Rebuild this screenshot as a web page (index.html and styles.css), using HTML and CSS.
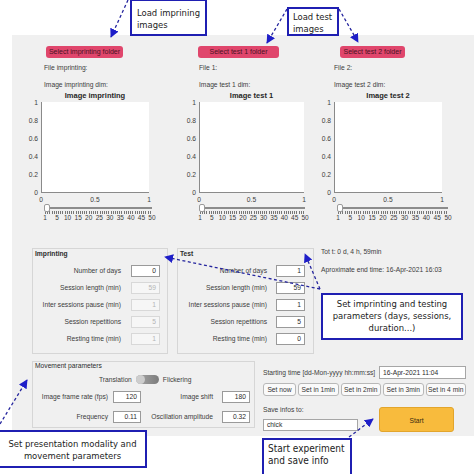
FILE: index.html
```html
<!DOCTYPE html>
<html lang="en">
<head>
  <meta charset="UTF-8">
  <title>Imprinting experiment</title>
  <link rel="stylesheet" href="styles.css">
</head>
<body>
<div class="page">

  <div class="app">

    <!-- three image columns -->
    <div class="images">
      <div class="col col-1">
        <div class="btn-folder">Select imprinting folder</div>
        <div class="lbl">File imprinting:</div>
        <div class="lbl lbl-dim">Image imprinting dim:</div>
        <div class="axes">
          <div class="ax-title">Image imprinting</div>
          <div class="yticks"><span>1</span><span>0.8</span><span>0.6</span><span>0.4</span><span>0.2</span><span>0</span></div>
          <div class="plot"></div>
          <div class="xticks"><span>0</span><span>0.5</span><span>1</span></div>
        </div>
        <div class="slider">
          <div class="track"><div class="thumb"></div></div>
          <div class="ticks"></div>
          <div class="tick-labels">
            <span class="t0"><i>1</i></span><span class="t4"><i>5</i></span><span><i>10</i></span><span><i>15</i></span><span><i>20</i></span><span><i>25</i></span><span><i>30</i></span><span><i>35</i></span><span><i>40</i></span><span><i>45</i></span><span><i>50</i></span>
          </div>
        </div>
      </div>

      <div class="col col-2">
        <div class="btn-folder">Select test 1 folder</div>
        <div class="lbl">File 1:</div>
        <div class="lbl lbl-dim">Image test 1 dim:</div>
        <div class="axes">
          <div class="ax-title">Image test 1</div>
          <div class="yticks"><span>1</span><span>0.8</span><span>0.6</span><span>0.4</span><span>0.2</span><span>0</span></div>
          <div class="plot"></div>
          <div class="xticks"><span>0</span><span>0.5</span><span>1</span></div>
        </div>
        <div class="slider">
          <div class="track"><div class="thumb"></div></div>
          <div class="ticks"></div>
          <div class="tick-labels">
            <span class="t0"><i>1</i></span><span class="t4"><i>5</i></span><span><i>10</i></span><span><i>15</i></span><span><i>20</i></span><span><i>25</i></span><span><i>30</i></span><span><i>35</i></span><span><i>40</i></span><span><i>45</i></span><span><i>50</i></span>
          </div>
        </div>
      </div>

      <div class="col col-3">
        <div class="btn-folder">Select test 2 folder</div>
        <div class="lbl">File 2:</div>
        <div class="lbl lbl-dim">Image test 2 dim:</div>
        <div class="axes">
          <div class="ax-title">Image test 2</div>
          <div class="yticks"><span>1</span><span>0.8</span><span>0.6</span><span>0.4</span><span>0.2</span><span>0</span></div>
          <div class="plot"></div>
          <div class="xticks"><span>0</span><span>0.5</span><span>1</span></div>
        </div>
        <div class="slider">
          <div class="track"><div class="thumb"></div></div>
          <div class="ticks"></div>
          <div class="tick-labels">
            <span class="t0"><i>1</i></span><span class="t4"><i>5</i></span><span><i>10</i></span><span><i>15</i></span><span><i>20</i></span><span><i>25</i></span><span><i>30</i></span><span><i>35</i></span><span><i>40</i></span><span><i>45</i></span><span><i>50</i></span>
          </div>
        </div>
      </div>
    </div>

    <!-- session parameters -->
    <div class="params">
      <div class="panel panel-imprint">
        <div class="panel-title bold">Imprinting</div>
        <div class="rows">
          <div class="row-lbl">Number of days</div><div class="field">0</div>
          <div class="row-lbl">Session length (min)</div><div class="field off">59</div>
          <div class="row-lbl">Inter sessions pause (min)</div><div class="field off">1</div>
          <div class="row-lbl">Session repetitions</div><div class="field off">5</div>
          <div class="row-lbl">Resting time (min)</div><div class="field off">1</div>
        </div>
      </div>
      <div class="panel panel-test">
        <div class="panel-title bold">Test</div>
        <div class="rows">
          <div class="row-lbl">Number of days</div><div class="field">1</div>
          <div class="row-lbl">Session length (min)</div><div class="field">59</div>
          <div class="row-lbl">Inter sessions pause (min)</div><div class="field">1</div>
          <div class="row-lbl">Session repetitions</div><div class="field">5</div>
          <div class="row-lbl">Resting time (min)</div><div class="field">0</div>
        </div>
      </div>
      <div class="info">
        <div class="lbl">Tot t: 0 d, 4 h, 59min</div>
        <div class="lbl info-end">Aproximate end time: 16-Apr-2021 16:03</div>
      </div>
    </div>

    <!-- movement + start -->
    <div class="bottom">
      <div class="panel panel-move">
        <div class="panel-title">Movement parameters</div>
        <div class="toggle-row">
          <span>Translation</span>
          <div class="switch"><div class="knob"></div></div>
          <span>Flickering</span>
        </div>
        <div class="move-grid">
          <div class="row-lbl">Image frame rate (fps)</div><div class="field">120</div>
          <div class="row-lbl">Image shift</div><div class="field">180</div>
          <div class="row-lbl">Frequency</div><div class="field">0.11</div>
          <div class="row-lbl">Oscillation amplitude</div><div class="field">0.32</div>
        </div>
      </div>

      <div class="run">
        <div class="start-row">
          <span>Starting time [dd-Mon-yyyy hh:mm:ss]</span>
          <div class="field field-left field-time">16-Apr-2021 11:04</div>
        </div>
        <div class="set-row">
          <div class="btn btn-now">Set now</div>
          <div class="btn">Set in 1min</div>
          <div class="btn">Set in 2min</div>
          <div class="btn">Set in 3min</div>
          <div class="btn">Set in 4 min</div>
        </div>
        <div class="save-row">
          <div class="save-col">
            <div class="lbl">Save infos to:</div>
            <div class="field field-left field-save">chick</div>
          </div>
          <div class="btn-start">Start</div>
        </div>
      </div>
    </div>
  </div>

  <!-- annotations over the screenshot -->
  <svg class="arrows" width="474" height="474" viewBox="0 0 474 474">
    <defs>
      <marker id="ah" viewBox="0 0 10 10" refX="9" refY="5" markerWidth="9" markerHeight="9" markerUnits="userSpaceOnUse" orient="auto">
        <path d="M0 0L10 5L0 10z" fill="#1e1ec8"/>
      </marker>
    </defs>
    <g stroke="#25259e" stroke-width="1.3" stroke-dasharray="3 2.5" fill="none" marker-end="url(#ah)">
      <line x1="128" y1="0" x2="111" y2="37"/>
      <line x1="287" y1="9" x2="267" y2="43"/>
      <line x1="339" y1="9" x2="358" y2="42"/>
      <line x1="320" y1="289" x2="165" y2="257"/>
      <line x1="320" y1="289" x2="305" y2="254"/>
      <line x1="0" y1="424" x2="27" y2="380"/>
      <line x1="349" y1="437" x2="373" y2="419"/>
    </g>
  </svg>

  <div class="note note-imp">Load imprining<br>images</div>
  <div class="note note-test">Load test<br>images</div>
  <div class="note note-params">Set imprinting and testing<br>parameters (days, sessions,<br>duration...)</div>
  <div class="note note-move">Set presentation modality and<br>movement parameters</div>
  <div class="note note-start">Start experiment<br>and save info</div>

</div>
</body>
</html>
```

FILE: styles.css
```css
body {
  margin: 0;
  background: #fff;
}
.page {
  position: relative;
  width: 474px;
  height: 474px;
  overflow: hidden;
  font-family: 'Liberation Sans', Arial, sans-serif;
  font-size: 6.7px;
  color: #3c3c3c;
}
.bold {
  font-weight: bold;
}

/* main window */
.app {
  margin: 35px 0 0 12px;
  height: 401px;
  padding: 11px 0 0 16px;
  box-sizing: border-box;
  background: #f0f0f0;
}

.images {
  display: flex;
}
.col-1 { width: 158px; }
.col-2 { width: 135px; }
.col-3 { width: 140px; }

.btn-folder {
  height: 12px;
  line-height: 12px;
  border-radius: 3px;
  background: #e0466c;
  color: #4a1424;
  text-align: center;
  font-size: 7px;
  white-space: nowrap;
}
.col-1 .btn-folder { margin-left: 18px; width: 77px; }
.col-2 .btn-folder { margin-left: 12px; width: 81px; }
.col-3 .btn-folder { margin-left: 19px; width: 65px; }

.lbl {
  height: 10px;
  line-height: 10px;
  white-space: nowrap;
}
.col .lbl { margin-top: 5px; margin-left: 13px; }
.col-1 .lbl { margin-left: 16px; }
.col .lbl-dim { margin-top: 7px; }

/* axes */
.axes {
  display: grid;
  grid-template-columns: 13px 108px;
}
.col-2 .axes { grid-template-columns: 13px 105px; }
.ax-title {
  grid-column: 2;
  margin-top: 1px;
  height: 10px;
  line-height: 10px;
  text-align: center;
  font-weight: bold;
  font-size: 7.5px;
  color: #262626;
}
.yticks {
  grid-column: 1;
  margin-top: 1px;
  height: 91px;
  padding-right: 3px;
  display: flex;
  flex-direction: column;
  justify-content: space-between;
}
.yticks span {
  height: 0;
  display: flex;
  align-items: center;
  justify-content: flex-end;
}
.plot {
  grid-column: 2;
  margin-top: 1px;
  height: 91px;
  box-sizing: border-box;
  background: #fff;
  border-left: 1.5px solid #8a8a8a;
  border-bottom: 1.5px solid #8a8a8a;
}
.xticks {
  grid-column: 2;
  margin-top: 3px;
  height: 8px;
  display: flex;
  justify-content: space-between;
}
.xticks span {
  width: 0;
  display: flex;
  justify-content: center;
  line-height: 8px;
}

/* slider */
.slider {
  margin-left: 17px;
  width: 107px;
}
.col-2 .slider { margin-left: 14px; width: 105px; }
.col-3 .slider { width: 110px; }
.track {
  height: 7px;
  display: flex;
  align-items: center;
  background: linear-gradient(#8c8c8c, #8c8c8c) 0 50% / 100% 2px no-repeat;
}
.thumb {
  width: 4px;
  height: 6px;
  margin-left: -1px;
  background: #fff;
  border: 1px solid #9a9a9a;
  border-radius: 2px;
}
.ticks {
  height: 3px;
  background: repeating-linear-gradient(to right, #777 0 1px, transparent 1px calc(100% / 49));
}
.tick-labels {
  display: flex;
  height: 7px;
  line-height: 7px;
  font-size: 6.5px;
}
.tick-labels span {
  flex: 5 0 0;
  text-align: right;
  white-space: nowrap;
}
.tick-labels .t0 { flex: 0 0 0; text-align: left; }
.tick-labels .t4 { flex-grow: 4; }
.tick-labels i {
  display: inline-block;
  font-style: normal;
  transform: translateX(50%);
}
.tick-labels .t0 i { transform: translateX(-50%); }

/* parameter panels */
.params {
  display: flex;
  margin: 27px 0 0 4px;
}
.panel {
  border: 1px solid #d6d6d6;
  box-sizing: border-box;
}
.panel-imprint { width: 136px; height: 106px; }
.panel-test { width: 137px; height: 106px; margin-left: 9px; }
.panel-title {
  height: 9px;
  line-height: 9px;
  padding-left: 2px;
  color: #2c2c2c;
}
.rows {
  margin-top: 7px;
  padding-right: 7px;
  display: grid;
  grid-template-columns: 1fr 29px;
  column-gap: 10px;
  row-gap: 5px;
}
.panel-test .rows { column-gap: 9px; padding-right: 8px; }
.row-lbl {
  height: 12px;
  line-height: 12px;
  text-align: right;
  white-space: nowrap;
}
.field {
  height: 12px;
  line-height: 10px;
  box-sizing: border-box;
  padding: 0 3px;
  border: 1px solid #9a9a9a;
  background: #fff;
  text-align: right;
  color: #2a2a2a;
  white-space: nowrap;
}
.field.off {
  border-color: #d8d8d8;
  background: #f6f6f6;
  color: #b4b4b4;
}
.field-left { text-align: left; }

.info {
  margin-left: 7px;
}
.info .lbl { margin-top: -1px; }
.info .info-end { margin-top: 8px; }

/* movement + start */
.bottom {
  display: flex;
  margin: 7px 0 0 4px;
}
.panel-move {
  width: 223px;
  height: 67px;
}
.panel-move .panel-title {
  height: 8px;
  line-height: 8px;
}
.toggle-row {
  display: flex;
  align-items: center;
  height: 10px;
  margin-top: 4px;
  padding-left: 66px;
  gap: 4px;
}
.switch {
  width: 23px;
  height: 9px;
  border-radius: 5px;
  background: linear-gradient(to right, #a8a8a8, #7c7c7c);
  display: flex;
  align-items: center;
}
.knob {
  width: 9px;
  height: 9px;
  border-radius: 50%;
  background: #cdcdcd;
}
.move-grid {
  margin-top: 7px;
  display: grid;
  grid-template-columns: 75px 28px 1fr 28px;
  column-gap: 5px;
  row-gap: 8px;
  padding-right: 4px;
}
.move-grid .row-lbl:nth-child(3) { margin-right: 4px; }
.move-grid .row-lbl:nth-child(7) { margin-right: 4px; }

.run {
  margin-left: 8px;
  width: 203px;
  padding-top: 5px;
}
.start-row {
  display: flex;
  align-items: center;
  justify-content: space-between;
  white-space: nowrap;
}
.field-time {
  width: 87px;
  height: 13px;
  line-height: 11px;
  border-color: #a6a6a6;
}
.set-row {
  display: flex;
  gap: 2px;
  margin-top: 4px;
}
.btn {
  flex: 1;
  height: 13px;
  line-height: 11px;
  box-sizing: border-box;
  border: 1px solid #b8b8b8;
  border-radius: 3px;
  background: #fafafa;
  text-align: center;
  white-space: nowrap;
  color: #333;
}
.btn-now { flex: 0 0 33px; }
.save-row {
  display: flex;
  margin-top: 9px;
}
.save-col {
  width: 95px;
}
.field-save {
  margin-top: 4px;
  border-color: #a6a6a6;
}
.btn-start {
  margin: 2px 0 0 21px;
  width: 75px;
  height: 25px;
  line-height: 25px;
  box-sizing: border-box;
  border: 1px solid #e2a52c;
  border-radius: 3px;
  background: #f8bb3d;
  text-align: center;
  color: #3a2a10;
}

/* annotations */
.arrows {
  position: absolute;
  left: 0;
  top: 0;
}
.note {
  position: absolute;
  box-sizing: border-box;
  border: 2px solid #1f1fb2;
  background: #fff;
  font-family: 'DejaVu Sans Condensed', 'DejaVu Sans', sans-serif;
  font-stretch: condensed;
  font-size: 9.4px;
  line-height: 12px;
  color: #1c1c1c;
  white-space: nowrap;
}
.note-imp {
  left: 130px;
  top: -1px;
  width: 77px;
  height: 37px;
  padding: 6px 0 0 5px;
}
.note-test {
  left: 287px;
  top: 7px;
  width: 52px;
  height: 29px;
  padding: 2px 0 0 4px;
}
.note-params {
  left: 321px;
  top: 293px;
  width: 142px;
  height: 47px;
  padding-top: 3px;
  text-align: center;
}
.note-move {
  left: -2px;
  top: 430px;
  width: 149px;
  height: 38px;
  padding-top: 6px;
  text-align: center;
}
.note-start {
  left: 262px;
  top: 438px;
  width: 90px;
  height: 40px;
  padding: 3px 0 0 4px;
  font-size: 10px;
}
```
